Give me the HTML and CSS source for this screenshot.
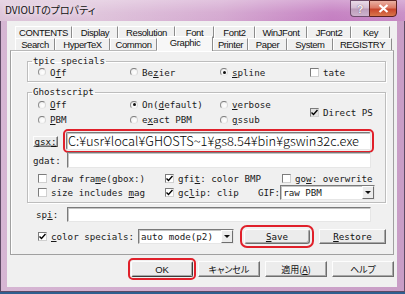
FILE: index.html
```html
<!DOCTYPE html>
<html>
<head>
<meta charset="utf-8">
<link rel="stylesheet" href="styles.css">
</head>
<body>
<div class="window">
  <div class="titlebar">
    <span class="title">DVIOUTのプロパティ</span>
    <div class="caption-btns">
      <span class="cbtn help">?</span>
      <span class="cbtn close"><svg width="11" height="9" viewBox="0 0 11 9"><path d="M1.5 1 L9.5 8 M9.5 1 L1.5 8" stroke="#fff" stroke-width="2.2" fill="none"/></svg></span>
    </div>
  </div>
  <div class="client">
    <div class="tabs">
      <div class="tabrow row1">
        <span class="tab">CONTENTS</span><span class="tab">Display</span><span class="tab">Resolution</span><span class="tab">Font</span><span class="tab">Font2</span><span class="tab">WinJFont</span><span class="tab">JFont2</span><span class="tab">Key</span>
      </div>
      <div class="tabrow row2">
        <span class="tab">Search</span><span class="tab">HyperTeX</span><span class="tab">Common</span><span class="tab active">Graphic</span><span class="tab">Printer</span><span class="tab">Paper</span><span class="tab">System</span><span class="tab">REGISTRY</span>
      </div>
    </div>
    <div class="panel">
      <fieldset class="group tpic">
        <legend>tpic specials</legend>
        <div class="optgrid">
          <span class="opt"><span class="radio"></span><span class="t">O<u>f</u>f</span></span>
          <span class="opt"><span class="radio"></span><span class="t">Be<u>z</u>ier</span></span>
          <span class="opt"><span class="radio on"></span><span class="t"><u>s</u>pline</span></span>
          <span class="opt"><span class="check"></span><span class="t">tate</span></span>
        </div>
      </fieldset>
      <fieldset class="group gs">
        <legend>Ghostscript</legend>
        <div class="optgrid two">
          <span class="opt"><span class="radio"></span><span class="t"><u>O</u>ff</span></span>
          <span class="opt"><span class="radio on"></span><span class="t">On(<u>d</u>efault)</span></span>
          <span class="opt"><span class="radio"></span><span class="t"><u>v</u>erbose</span></span>
          <span class="opt direct"><span class="check on gray"><svg width="7" height="7" viewBox="0 0 7 7"><path d="M0.5 3.5 L2.5 5.5 L6.5 1" stroke="#000" stroke-width="1.4" fill="none"/></svg></span><span class="t">Direct PS</span></span>
          <span class="opt"><span class="radio"></span><span class="t"><u>P</u>BM</span></span>
          <span class="opt"><span class="radio"></span><span class="t">e<u>x</u>act PBM</span></span>
          <span class="opt"><span class="radio"></span><span class="t"><u>g</u>ssub</span></span>
        </div>
        <div class="gsxrow">
          <span class="btn small"><span class="t">gsx<u>:</u></span></span>
          <span class="input marked">C:¥usr¥local¥GHOSTS~1¥gs8.54¥bin¥gswin32c.exe</span>
        </div>
        <div class="gdatrow">
          <span class="lbl">gdat:</span>
          <span class="input plain"></span>
        </div>
        <div class="cbrow">
          <span class="opt"><span class="check"></span><span class="t">draw fra<u>m</u>e(gbox:)</span></span>
          <span class="opt"><span class="check on"><svg width="7" height="7" viewBox="0 0 7 7"><path d="M0.5 3.5 L2.5 5.5 L6.5 1" stroke="#000" stroke-width="1.4" fill="none"/></svg></span><span class="t">gfi<u>t</u>: color BMP</span></span>
          <span class="opt c3"><span class="check"></span><span class="t">go<u>w</u>: overwrite</span></span>
        </div>
        <div class="cbrow">
          <span class="opt"><span class="check"></span><span class="t">size includes <u>m</u>ag</span></span>
          <span class="opt"><span class="check on"><svg width="7" height="7" viewBox="0 0 7 7"><path d="M0.5 3.5 L2.5 5.5 L6.5 1" stroke="#000" stroke-width="1.4" fill="none"/></svg></span><span class="t">gc<u>l</u>ip: clip</span></span>
          <span class="opt gif"><span class="t">GIF:</span><span class="combo gifcombo"><span class="ctext">raw PBM</span><span class="arrow"></span></span></span>
        </div>
      </fieldset>
      <div class="spirow">
        <span class="lbl">sp<u>i</u>:</span>
        <span class="input plain"></span>
      </div>
      <div class="colorrow">
        <span class="opt"><span class="check on"><svg width="7" height="7" viewBox="0 0 7 7"><path d="M0.5 3.5 L2.5 5.5 L6.5 1" stroke="#000" stroke-width="1.4" fill="none"/></svg></span><span class="t"><u>c</u>olor specials:</span></span>
        <span class="combo colorcombo"><span class="ctext">auto mode(p2)</span><span class="arrow"></span></span>
        <span class="btn mono save marked"><span class="t"><u>S</u>ave</span></span>
        <span class="btn mono restore"><span class="t"><u>R</u>estore</span></span>
      </div>
    </div>
    <div class="dlgbtns">
      <span class="btn dlg ok marked">OK</span>
      <span class="btn dlg jp">キャンセル</span>
      <span class="btn dlg jp"><span class="t">適用(<u>A</u>)</span></span>
      <span class="btn dlg jp">ヘルプ</span>
    </div>
  </div>
</div>
</body>
</html>
```

FILE: styles.css
```css
* { box-sizing: border-box; }
html, body { margin: 0; padding: 0; }
body {
  width: 405px;
  height: 294px;
  overflow: hidden;
  background: #2f5f8f;
  font-family: "Liberation Sans", "Noto Sans CJK JP", sans-serif;
}
.window {
  width: 405px;
  height: 292px;
  background: linear-gradient(90deg, #d6b6d3 0%, #c99dc6 100%);
  border: 1px solid #5e4a64;
  border-top: none;
  display: flex;
  flex-direction: column;
}
.titlebar {
  height: 21px;
  flex: none;
  display: flex;
  align-items: flex-start;
  padding-left: 5px;
  margin: 0 -1px;
  background:
    linear-gradient(180deg, rgba(255,255,255,0.3) 0%, rgba(255,255,255,0.05) 60%, rgba(255,255,255,0) 100%),
    linear-gradient(90deg, #dcc4d8 0%, #dec2da 25%, #d4a8d0 55%, #c47ec1 82%, #c88cc5 100%);
}
.title {
  font-family: "Noto Sans CJK JP", sans-serif;
  font-size: 10px;
  line-height: 12px;
  margin-top: 4px;
  color: #111;
  font-feature-settings: "palt";
  text-shadow: 0 0 4px #f4eaf2, 0 0 8px #f4eaf2;
}
.caption-btns {
  margin-left: auto;
  margin-right: 8px;
  display: flex;
}
.cbtn {
  height: 17px;
  display: flex;
  align-items: center;
  justify-content: center;
}
.cbtn.help {
  width: 19px;
  border: 1px solid #6e4e6c;
  border-right: none;
  border-radius: 0 0 0 4px;
  background: linear-gradient(180deg, #e9dbe8 0%, #d4bcd3 48%, #bb9dba 52%, #cdb3cc 100%);
  color: #f6f0f6;
  font-size: 11px;
  font-weight: bold;
  text-shadow: 0 0 1px #553355;
}
.cbtn.close {
  width: 28px;
  border: 1px solid #5a2020;
  border-radius: 0 0 4px 0;
  background: linear-gradient(180deg, #eab0a2 0%, #dc7a66 45%, #c8452c 55%, #d9774c 100%);
}
.client {
  flex: 1;
  margin: 0 7px 4px 6px;
  background: #f0f0f0;
  padding-top: 5px;
  display: flex;
  flex-direction: column;
}
.tabs {
  margin-left: 8px;
  display: flex;
  flex-direction: column;
}
.tabrow {
  display: flex;
  height: 12px;
}
.tab {
  height: 12px;
  display: flex;
  align-items: center;
  justify-content: center;
  font-size: 9.5px;
  letter-spacing: -0.4px;
  color: #111;
  border-top: 1px solid #fff;
  border-left: 1px solid #fff;
  border-right: 1px solid #8c8c8c;
  background: #f0f0f0;
}
.row1 .tab:nth-child(1) { width: 57px; }
.row1 .tab:nth-child(2) { width: 46px; }
.row1 .tab:nth-child(3) { width: 57px; }
.row1 .tab:nth-child(4) { width: 39px; }
.row1 .tab:nth-child(5) { width: 41px; }
.row1 .tab:nth-child(6) { width: 52px; }
.row1 .tab:nth-child(7) { width: 44px; }
.row1 .tab:nth-child(8) { width: 39px; }
.row2 .tab:nth-child(1) { width: 40px; }
.row2 .tab:nth-child(2) { width: 55px; }
.row2 .tab:nth-child(3) { width: 47px; }
.row2 .tab:nth-child(4) { width: 56px; }
.row2 .tab:nth-child(5) { width: 35px; }
.row2 .tab:nth-child(6) { width: 39px; }
.row2 .tab:nth-child(7) { width: 46px; }
.row2 .tab:nth-child(8) { width: 59px; }
.tab.active {
  height: 15px;
  margin-top: -2px;
  padding-bottom: 3px;
  background: #f7f7f7;
  position: relative;
  z-index: 2;
}
.panel {
  margin-left: 3px;
  width: 384px;
  height: 205px;
  border: 1px solid #a0a0a0;
  border-top-color: #b8b8b8;
  box-shadow: inset 1px 1px 0 #fff;
  padding: 5px 7px 0 16px;
  background: #f0f0f0;
  font-family: "DejaVu Sans Mono", "Liberation Mono", monospace;
  font-size: 9.2px;
  color: #1a1a1a;
}
.group {
  margin: 0;
  padding: 0;
  border: 1px solid #bdbdbd;
  box-shadow: inset 1px 1px 0 #fff, 1px 1px 0 #fff;
  min-width: 0;
}
.group legend {
  padding: 0 1px;
  margin-left: 4px;
  height: 10px;
  line-height: 10px;
}
.gs { margin-top: 5px; padding-bottom: 2px; }
.tpic { padding-bottom: 3px; }
.optgrid {
  display: grid;
  grid-template-columns: 92px 90px 90px 1fr;
  padding-left: 10px;
  grid-auto-rows: 12px;
}
.optgrid.two {
  grid-auto-rows: 15px;
}
.optgrid.two .direct {
  grid-column: 4;
  grid-row: 1 / span 2;
  align-self: center;
}
.opt {
  display: flex;
  align-items: center;
  white-space: nowrap;
  gap: 4px;
}
.t { white-space: pre; }
.radio {
  width: 8px;
  height: 8px;
  border-radius: 50%;
  border: 1px solid;
  border-color: #7c7c7c #d8d8d8 #e8e8e8 #8c8c8c;
  background: radial-gradient(circle at 60% 60%, #fff 0%, #f2f2f2 70%, #dcdcdc 100%);
  flex: none;
  display: flex;
  align-items: center;
  justify-content: center;
}
.radio.on::after {
  content: "";
  width: 3px;
  height: 3px;
  border-radius: 50%;
  background: #111;
}
.check {
  width: 9px;
  height: 9px;
  border: 1px solid;
  border-color: #7c7c7c #d0d0d0 #d0d0d0 #7c7c7c;
  background: #fff;
  flex: none;
  display: flex;
  align-items: center;
  justify-content: center;
}
.check.gray { background: #e2e2e2; }
.gsxrow {
  display: flex;
  align-items: center;
  margin-top: 5px;
  height: 18px;
  padding-left: 5px;
}
.btn {
  display: flex;
  align-items: center;
  justify-content: center;
  background: #ececec;
  border: 1px solid;
  border-color: #fdfdfd #6e6e6e #6e6e6e #fdfdfd;
  box-shadow: inset -1px -1px 0 #a8a8a8;
  color: #111;
  white-space: nowrap;
}
.btn.small {
  width: 25px;
  height: 11px;
  font-size: 9.2px;
  line-height: 9px;
}
.input {
  background: #fff;
  border: 1px solid;
  border-color: #7a7a7a #e6e6e6 #e6e6e6 #7a7a7a;
  box-shadow: inset 1px 1px 0 #c4c4c4;
  display: flex;
  align-items: center;
}
.gsxrow .input {
  margin-left: 8px;
  width: 305px;
  height: 18px;
  padding-left: 1px;
  font-family: "Noto Sans CJK JP", "Liberation Sans", sans-serif;
  font-size: 12.8px;
  font-weight: 300;
  line-height: 14px;
  color: #000;
  white-space: nowrap;
  overflow: hidden;
}
.marked {
  outline: 2px solid #e0202a;
  outline-offset: 1px;
  border-radius: 4px;
}
.input.marked { border-radius: 2px; }
.gdatrow {
  display: flex;
  align-items: center;
  margin-top: 2px;
  height: 16px;
  padding-left: 5px;
}
.gdatrow .lbl { width: 34px; }
.gdatrow .input { width: 304px; height: 16px; }
.cbrow {
  display: grid;
  grid-template-columns: 127px 93px 1fr;
  padding-left: 10px;
  height: 14px;
  align-items: center;
}
.cbrow + .cbrow { height: 15px; }
.gdatrow + .cbrow { margin-top: 3px; }
.cbrow .c3 { padding-left: 24px; }
.gif { gap: 0; }
.combo {
  display: flex;
  align-items: center;
  background: #fff;
  border: 1px solid;
  border-color: #7a7a7a #e6e6e6 #e6e6e6 #7a7a7a;
  box-shadow: inset 1px 1px 0 #c4c4c4;
  height: 15px;
  padding-left: 2px;
}
.ctext { flex: 1; white-space: pre; overflow: hidden; }
.arrow {
  width: 12px;
  height: 13px;
  background: #ececec;
  border: 1px solid;
  border-color: #fdfdfd #6e6e6e #6e6e6e #fdfdfd;
  display: flex;
  align-items: center;
  justify-content: center;
  flex: none;
}
.arrow::after {
  content: "";
  border-left: 3px solid transparent;
  border-right: 3px solid transparent;
  border-top: 3px solid #111;
}
.gifcombo { width: 95px; }
.spirow {
  display: flex;
  align-items: center;
  margin-top: 4px;
  height: 15px;
  padding-left: 9px;
}
.spirow .lbl { width: 31px; }
.spirow .input { width: 304px; height: 15px; }
.colorrow {
  display: flex;
  align-items: center;
  margin-top: 6px;
  height: 16px;
  padding-left: 11px;
}
.colorcombo { width: 96px; margin-left: 4px; }
.btn.mono {
  height: 15px;
  font-size: 9.2px;
}
.btn.save { width: 66px; margin-left: 10px; }
.btn.restore { width: 67px; margin-left: 9px; }
.btn.save.marked { outline-offset: 2px; border-radius: 3px; }
.dlgbtns {
  display: flex;
  justify-content: flex-end;
  gap: 5px;
  margin-top: 6px;
  padding-right: 3px;
}
.btn.dlg {
  width: 62px;
  height: 16px;
  font-size: 9.5px;
}
.btn.jp {
  font-family: "Noto Sans CJK JP", sans-serif;
  font-feature-settings: "palt";
  font-size: 9px;
}
.btn.ok {
  border-color: #fdfdfd #3c3c3c #3c3c3c #fdfdfd;
  border-radius: 2px;
}
u { text-decoration-thickness: 1px; text-underline-offset: 1px; }
```
